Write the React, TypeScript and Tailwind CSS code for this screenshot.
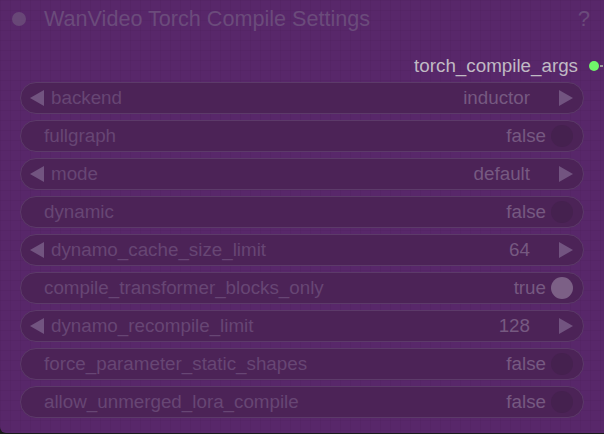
const widgets = [
  { name: "backend", value: "inductor", kind: "combo" },
  { name: "fullgraph", value: "false", kind: "toggle" },
  { name: "mode", value: "default", kind: "combo" },
  { name: "dynamic", value: "false", kind: "toggle" },
  { name: "dynamo_cache_size_limit", value: "64", kind: "combo" },
  { name: "compile_transformer_blocks_only", value: "true", kind: "toggle" },
  { name: "dynamo_recompile_limit", value: "128", kind: "combo" },
  { name: "force_parameter_static_shapes", value: "false", kind: "toggle" },
  { name: "allow_unmerged_lora_compile", value: "false", kind: "toggle" },
];

function Arrow({ dir }: { dir: "left" | "right" }) {
  return (
    <svg width="14" height="16" viewBox="0 0 14 16" className="shrink-0">
      {dir === "left" ? (
        <polygon points="14,0 14,16 0,8" fill="#725480" />
      ) : (
        <polygon points="0,0 0,16 14,8" fill="#725480" />
      )}
    </svg>
  );
}

export default function App() {
  return (
    <div className="w-[604px] h-[434px] bg-[#1c1c1c] overflow-hidden font-['Liberation_Sans',Arial,sans-serif]">
      <div className="relative w-[604px] h-[433px] rounded-bl-[6px] bg-[#58276a] bg-[linear-gradient(to_right,rgba(0,0,0,0.04)_1px,transparent_1px),linear-gradient(to_bottom,rgba(0,0,0,0.04)_1px,transparent_1px)] bg-[size:10px_10px]">
        {/* title */}
        <div className="flex items-center h-[38px] pl-[12px] pr-[14px]">
          <div className="w-[14px] h-[14px] rounded-full bg-[#684777]" />
          <span className="ml-[18px] text-[21.6px] text-[#6b4b7b] leading-none">
            WanVideo Torch Compile Settings
          </span>
          <span className="ml-auto text-[22px] text-[#6b4b7b] leading-none">?</span>
        </div>

        {/* output slot */}
        <div className="flex items-center justify-end h-[22px] mt-[17px] pr-[1px]">
          <span className="text-[18.8px] text-[#c0bac4] leading-none">torch_compile_args</span>
          <div className="ml-[11px] w-[10px] h-[10px] rounded-full bg-[#70f56a]" />
          <div className="ml-[1px] w-[3px] h-[2px] bg-[#9a9a9a]" />
        </div>

        {/* widgets */}
        <div className="flex flex-col gap-[6px] mt-[5px] px-[20px]">
          {widgets.map((w) => (
            <div
              key={w.name}
              className="flex items-center h-[32px] rounded-full border border-[#5c3a69] bg-[#4c2357] text-[18.8px] leading-none"
            >
              {w.kind === "combo" ? (
                <>
                  <div className="ml-[9px]">
                    <Arrow dir="left" />
                  </div>
                  <span className="ml-[7px] text-[#674674]">{w.name}</span>
                  <span className="ml-auto text-[#765981]">{w.value}</span>
                  <div className="ml-[29px] mr-[10px]">
                    <Arrow dir="right" />
                  </div>
                </>
              ) : (
                <>
                  <span className="ml-[23px] text-[#674674]">{w.name}</span>
                  <span className="ml-auto text-[#765981]">{w.value}</span>
                  <div
                    className={`ml-[5px] mr-[10px] w-[22px] h-[22px] rounded-full ${
                      w.value === "true" ? "bg-[#7c6086]" : "bg-[#45214f]"
                    }`}
                  />
                </>
              )}
            </div>
          ))}
        </div>
      </div>
    </div>
  );
}
